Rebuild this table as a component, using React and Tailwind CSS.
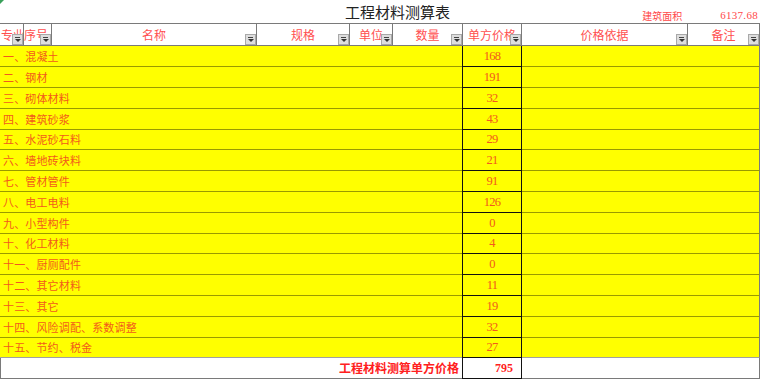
import React from "react";

const cols = [
  { label: "专业", w: "w-[24px]", align: "justify-start pl-[1px]" },
  { label: "序号", w: "w-[28px]", align: "justify-start" },
  { label: "名称", w: "w-[205px]", align: "justify-center" },
  { label: "规格", w: "w-[93px]", align: "justify-center" },
  { label: "单位", w: "w-[43px]", align: "justify-center" },
  { label: "数量", w: "w-[70px]", align: "justify-center" },
  { label: "单方价格", w: "w-[59px]", align: "justify-center" },
  { label: "价格依据", w: "w-[166px]", align: "justify-center" },
  { label: "备注", w: "w-[72px]", align: "justify-center" },
];

const rows = [
  ["一、混凝土", "168"],
  ["二、钢材", "191"],
  ["三、砌体材料", "32"],
  ["四、建筑砂浆", "43"],
  ["五、水泥砂石料", "29"],
  ["六、墙地砖块料", "21"],
  ["七、管材管件", "91"],
  ["八、电工电料", "126"],
  ["九、小型构件", "0"],
  ["十、化工材料", "4"],
  ["十一、厨厕配件", "0"],
  ["十二、其它材料", "11"],
  ["十三、其它", "19"],
  ["十四、风险调配、系数调整", "32"],
  ["十五、节约、税金", "27"],
];

const heights = ["h-[21px]", "h-[21px]", "h-[21px]", "h-[21px]", "h-[20px]"];

const serif = { fontFamily: '"Liberation Serif", "Noto Sans CJK SC", serif' };

function FilterBtn() {
  return (
    <div className="absolute right-0 bottom-0 w-[11px] h-[11px] bg-[#dedede] border border-[#a9a9a9] flex flex-col items-center justify-center">
      <div className="w-[5px] h-[1px] bg-[#444] mb-[1px]" />
      <div className="w-0 h-0 border-l-[3px] border-r-[3px] border-t-[3px] border-l-transparent border-r-transparent border-t-[#333]" />
    </div>
  );
}

export default function App() {
  return (
    <div className="w-[760px] h-[379px] bg-white overflow-hidden relative" style={serif}>
      <div className="absolute left-0 top-0 w-0 h-0 border-t-[4px] border-r-[4px] border-t-[#3aa05a] border-r-transparent" />
      {/* top area */}
      <div className="h-[23px] flex items-end relative">
        <div className="w-[345px]" />
        <div
          className="text-[15px] leading-none text-[#222] self-center"
          style={{ fontFamily: '"Noto Sans CJK SC", sans-serif' }}
        >
          工程材料测算表
        </div>
        <div className="flex-1" />
        <div
          className="text-[10px] leading-none text-[#ff4a4a] mb-[2px]"
          style={{ fontFamily: '"Noto Sans CJK SC", sans-serif' }}
        >
          建筑面积
        </div>
        <div className="w-[38px]" />
        <div className="text-[11px] leading-none text-[#ff4a4a] mb-[2px] pr-[2px] tracking-[0.3px]">6137.68</div>
      </div>

      {/* header */}
      <div className="flex border-t border-b border-[#7a7a7a] h-[23px]">
        {cols.map((c, i) => (
          <div
            key={i}
            className={`${c.w} relative border-r border-[#7a7a7a] flex items-center overflow-hidden ${c.align}`}
          >
            <span
              className="text-[12px] leading-none text-[#ff4f4f] whitespace-nowrap"
              style={{ fontFamily: '"Noto Sans CJK SC", sans-serif' }}
            >
              {c.label}
            </span>
            <FilterBtn />
          </div>
        ))}
      </div>

      {/* data rows */}
      {rows.map(([name, val], i) => (
        <div key={i} className={`flex bg-[#ffff00] ${heights[i % 5]}`}>
          <div
            className={`w-[462px] flex items-center pl-[3px] border-b ${
              i === rows.length - 1 ? "border-[#a0a0a0]" : "border-[#9a9a00]"
            }`}
          >
            <span
              className="text-[11px] leading-none text-[#f25a1c] tracking-[0.15px]"
              style={{ fontFamily: '"Noto Sans CJK SC", sans-serif' }}
            >
              {name}
            </span>
          </div>
          <div className="w-[60px] flex items-center justify-center border-l border-r border-b border-[#111]">
            <span className="text-[12.5px] leading-none text-[#f25a1c] tracking-[-0.8px]">{val}</span>
          </div>
          <div
            className={`flex-1 border-r border-b border-r-[#7a7a7a] ${
              i === rows.length - 1 ? "border-b-[#a0a0a0]" : "border-b-[#9a9a00]"
            }`}
          />
        </div>
      ))}

      {/* total row */}
      <div className="flex h-[21px]">
        <div className="w-[462px] flex items-center justify-end pr-[3px] border-l border-b border-[#7a7a7a]">
          <span
            className="text-[12px] leading-none font-bold text-[#ff2020]"
            style={{ fontFamily: '"Noto Sans CJK SC", sans-serif' }}
          >
            工程材料测算单方价格
          </span>
        </div>
        <div className="w-[60px] flex items-center justify-end pr-[8px] border-l border-r border-b border-[#111]">
          <span className="text-[12px] leading-none font-bold text-[#ff2020]">795</span>
        </div>
        <div className="flex-1 border-r border-b border-[#7a7a7a]" />
      </div>
    </div>
  );
}
